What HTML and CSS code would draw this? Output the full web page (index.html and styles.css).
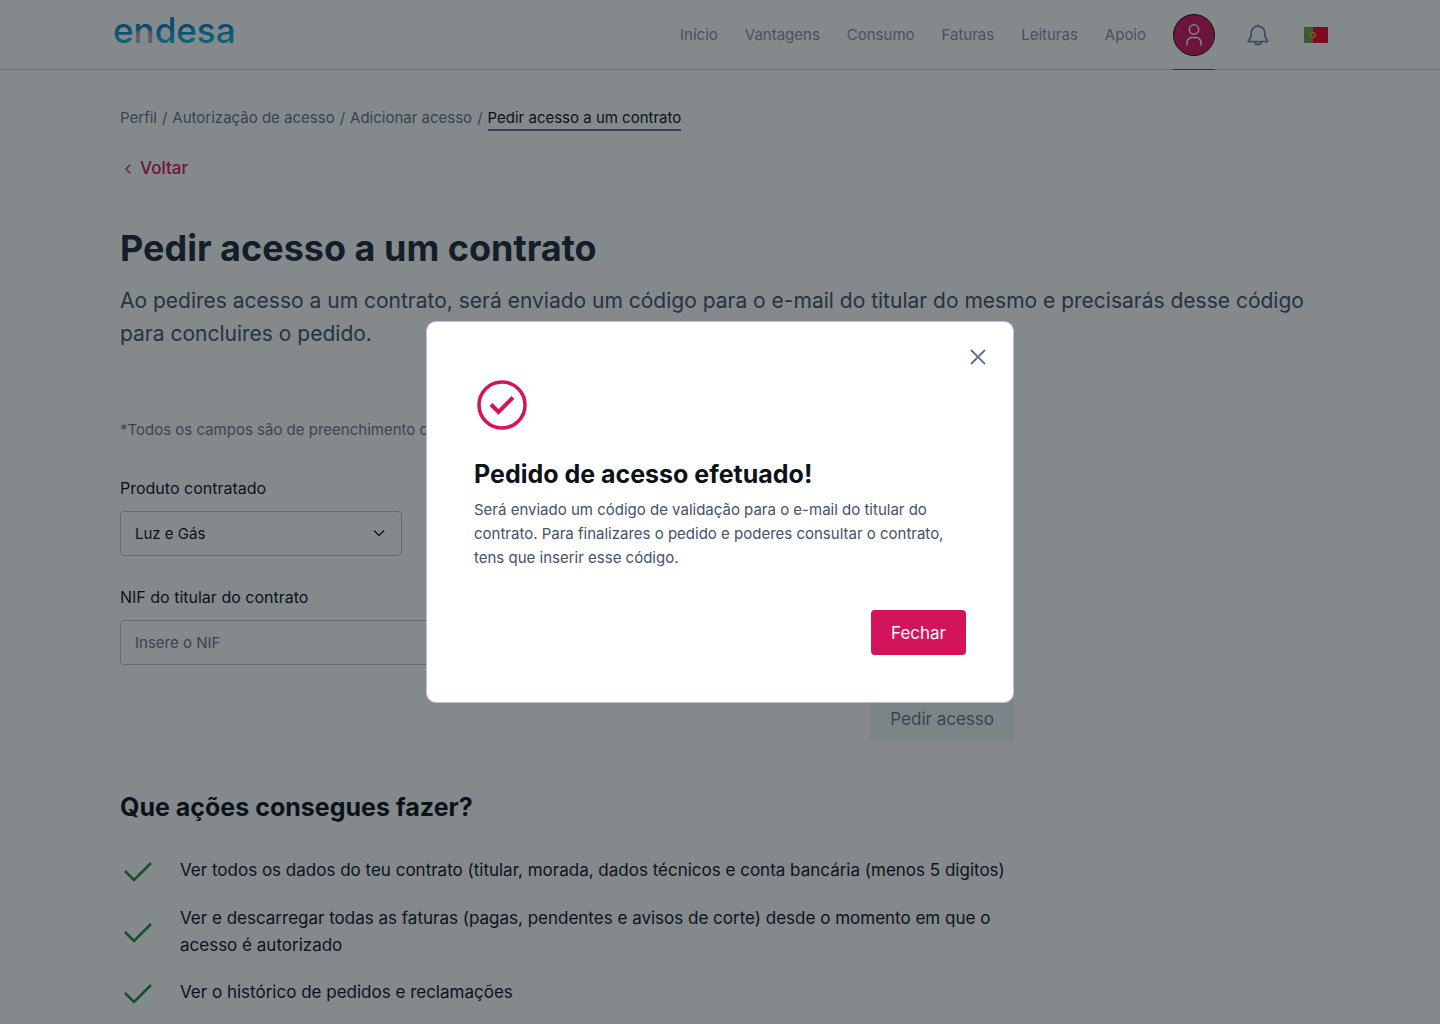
FILE: index.html
```html
<!DOCTYPE html>
<html lang="pt">
<head>
  <meta charset="UTF-8">
  <meta name="viewport" content="width=device-width, initial-scale=1.0">
  <title>Pedir acesso a um contrato</title>
  <link rel="stylesheet" href="styles.css">
</head>
<body class="modal-open">

<header class="header">
  <div class="header-inner">
    <a href="#" class="logo" aria-label="endesa">
      <svg width="140" height="52" viewBox="0 0 140 52">
        <defs>
          <linearGradient id="blue" gradientUnits="userSpaceOnUse" x1="0" y1="14" x2="0" y2="38">
            <stop offset="0.3" stop-color="#107fc4"/>
            <stop offset="0.9" stop-color="#10b4d8"/>
          </linearGradient>
          <linearGradient id="fade" gradientUnits="userSpaceOnUse" x1="0" y1="14" x2="0" y2="38">
            <stop offset="0.4" stop-color="#107fc4"/>
            <stop offset="0.65" stop-color="#b0acac"/>
          </linearGradient>
        </defs>
        <text x="1" y="38" class="logo-text" fill="url(#blue)">e<tspan fill="url(#fade)">n</tspan>desa</text>
      </svg>
    </a>
    <nav class="nav">
      <a href="#">Início</a>
      <a href="#">Vantagens</a>
      <a href="#">Consumo</a>
      <a href="#">Faturas</a>
      <a href="#">Leituras</a>
      <a href="#">Apoio</a>
      <a href="#" class="profile" aria-label="Perfil">
        <span class="avatar">
          <svg width="24" height="24" viewBox="0 0 24 24" fill="none" stroke="currentColor" stroke-width="1.5">
            <circle cx="12" cy="6.5" r="4.7"/>
            <path d="M5 22.5v-3a5 5 0 0 1 5-5h4a5 5 0 0 1 5 5v3"/>
          </svg>
        </span>
      </a>
    </nav>
    <button class="icon-btn bell" aria-label="Notificações">
      <svg width="24" height="24" viewBox="0 0 24 24" fill="none" stroke="currentColor" stroke-width="1.7" stroke-linejoin="round">
        <path d="M12 3.2V1.5M12 3.2a6.8 6.8 0 0 0-6.8 6.8c0 4-.6 5.8-2.7 7.2v1.5h19v-1.5c-2.1-1.4-2.7-3.2-2.7-7.2A6.8 6.8 0 0 0 12 3.2z"/>
        <path d="M9 18.7a3 3 0 0 0 6 0"/>
      </svg>
    </button>
    <button class="icon-btn flag" aria-label="Português">
      <svg width="24" height="16" viewBox="0 0 24 16">
        <path fill="#f00022" d="M0 0h24v16H0z"/>
        <path fill="#6da544" d="M0 0h9v16H0z"/>
        <circle cx="9" cy="8" r="2.6" fill="none" stroke="#ffda44"/>
        <path fill="#f00022" d="M7.5 6.5h3V8.500a1.5 1.5 0 0 1-3 0z"/>
        <path fill="#fff" d="M8.5 7.3h1v1.5h-1z"/>
      </svg>
    </button>
  </div>
</header>

<main class="container">
  <nav class="breadcrumb">
    <a href="#">Perfil</a> <span>/</span>
    <a href="#">Autorização de acesso</a> <span>/</span>
    <a href="#">Adicionar acesso</a> <span>/</span>
    <a href="#" class="current">Pedir acesso a um contrato</a>
  </nav>

  <a href="#" class="back">
    <svg width="16" height="16" viewBox="0 0 16 16" fill="none" stroke="currentColor" stroke-width="1.2">
      <path d="M10.5 3.5L6 8l4.5 4.5"/>
    </svg>
    Voltar
  </a>

  <h1>Pedir acesso a um contrato</h1>
  <p class="intro">Ao pedires acesso a um contrato, será enviado um código para o e-mail do titular do mesmo e precisarás desse código para concluires o pedido.</p>

  <form class="form">
    <p class="note">*Todos os campos são de preenchimento obrigatório</p>

    <label for="produto">Produto contratado</label>
    <div class="select">
      <select id="produto">
        <option>Luz e Gás</option>
      </select>
      <svg width="16" height="16" viewBox="0 0 16 16" fill="none" stroke="currentColor" stroke-width="1.3">
        <path d="M3 5.5l5 5 5-5"/>
      </svg>
    </div>

    <label for="nif">NIF do titular do contrato</label>
    <input type="text" id="nif" placeholder="Insere o NIF">

    <button type="submit" class="btn btn-disabled" disabled>Pedir acesso</button>
  </form>

  <section class="actions">
    <h2>Que ações consegues fazer?</h2>
    <ul>
      <li>
        <svg width="36" height="32" viewBox="0 0 36 32"><path d="M5 16l9 9L31 8"/></svg>
        <span>Ver todos os dados do teu contrato (titular, morada, dados técnicos e conta bancária (menos 5 digitos)</span>
      </li>
      <li>
        <svg width="36" height="32" viewBox="0 0 36 32"><path d="M5 16l9 9L31 8"/></svg>
        <span>Ver e descarregar todas as faturas (pagas, pendentes e avisos de corte) desde o momento em que o acesso é autorizado</span>
      </li>
      <li>
        <svg width="36" height="32" viewBox="0 0 36 32"><path d="M5 16l9 9L31 8"/></svg>
        <span>Ver o histórico de pedidos e reclamações</span>
      </li>
    </ul>
  </section>
</main>

<div class="overlay" id="overlay">
  <div class="modal" role="dialog" aria-modal="true" aria-labelledby="modal-title">
    <button class="close" aria-label="Fechar janela" onclick="closeModal()">
      <svg width="24" height="24" viewBox="0 0 24 24" fill="none" stroke="currentColor" stroke-width="1.8">
        <path d="M5 5l14 14M19 5L5 19"/>
      </svg>
    </button>
    <svg class="success" width="56" height="56" viewBox="0 0 56 56" fill="none" stroke="currentColor">
      <circle cx="28" cy="28" r="23" stroke-width="3.5"/>
      <path d="M17 27.5l7.5 7.5L39 20.5" stroke-width="4"/>
    </svg>
    <h2 id="modal-title">Pedido de acesso efetuado!</h2>
    <p>Será enviado um código de validação para o e-mail do titular do contrato. Para finalizares o pedido e poderes consultar o contrato, tens que inserir esse código.</p>
    <button class="btn btn-primary" onclick="closeModal()">Fechar</button>
  </div>
</div>

<script>
  function closeModal() {
    document.getElementById('overlay').style.display = 'none';
    document.body.classList.remove('modal-open');
  }
</script>

</body>
</html>
```
FILE: styles.css
```css
* {
  box-sizing: border-box;
}

body {
  margin: 0;
  background: #fff;
  color: #0b1219;
  font-family: Inter, "Open Sans", sans-serif;
  font-size: 15px;
  line-height: 24px;
}

.modal-open {
  overflow: hidden;
}

a {
  color: inherit;
  text-decoration: none;
}

button,
input,
select {
  font-family: inherit;
  font-size: 15px;
}

h1,
h2,
p,
ul {
  margin: 0;
  padding: 0;
}

svg {
  display: block;
  flex-shrink: 0;
}

/* header */
.header {
  border-bottom: 1px solid #c0cbdc;
}

.header-inner {
  display: flex;
  align-items: center;
  max-width: 1216px;
  height: 69px;
  margin: 0 auto;
}

.logo {
  margin-right: auto;
  padding-bottom: 8px;
}

.logo-text {
  font-family: Inter, sans-serif;
  font-size: 35px;
  font-weight: 500;
}

.nav {
  display: flex;
  align-items: center;
  gap: 27px;
  height: 100%;
  color: #8692a4;
}

.profile {
  display: flex;
  align-items: center;
  height: 70px;
  margin-bottom: -1px;
  border-bottom: 1px solid #4a5568;
}

.avatar {
  display: flex;
  align-items: center;
  justify-content: center;
  width: 42px;
  height: 42px;
  border: 1px solid #10151c;
  border-radius: 50%;
  background: #d3135a;
  color: #fff;
}

.icon-btn {
  padding: 0;
  border: none;
  background: none;
  color: #71839b;
  cursor: pointer;
}

.bell {
  margin: 0 34px 0 31px;
}

/* page */
.container {
  max-width: 1248px;
  margin: 0 auto;
  padding: 36px 24px 16px;
}

.breadcrumb {
  display: flex;
  gap: 5px;
  height: 25px;
  color: #64748b;
}

.breadcrumb .current {
  color: #0b1219;
  border-bottom: 2px solid #64748b;
}

.back {
  display: inline-flex;
  align-items: center;
  gap: 4px;
  margin-top: 24px;
  color: #d3135a;
  font-size: 17px;
  font-weight: 500;
  line-height: 27px;
}

h1 {
  margin-top: 36px;
  font-size: 36px;
  font-weight: 700;
  line-height: 56px;
  color: #1c2836;
}

.intro {
  margin-top: 8px;
  font-size: 21px;
  line-height: 33px;
  color: #42526b;
}

.form {
  display: flex;
  flex-direction: column;
  align-items: flex-start;
  max-width: 894px;
  margin-top: 68px;
}

.note {
  margin-bottom: 34px;
  color: #737880;
}

.form label {
  margin-bottom: 11px;
  font-size: 16px;
}

.select {
  display: grid;
  align-items: center;
  width: 282px;
  margin-bottom: 29px;
}

.select select,
.select svg {
  grid-area: 1 / 1;
}

.select svg {
  justify-self: end;
  margin-right: 15px;
  pointer-events: none;
}

.form select,
.form input {
  width: 100%;
  height: 45px;
  padding: 0 14px;
  border: 1px solid #b9c3d3;
  border-radius: 4px;
  background: none;
  color: #0b1219;
  appearance: none;
}

.form input::placeholder {
  color: #64748b;
  opacity: 1;
}

.btn {
  align-self: flex-end;
  height: 45px;
  padding: 0 20px;
  border: none;
  border-radius: 4px;
  font-size: 17px;
}

.btn-disabled {
  margin-top: 32px;
  background: #f1f4f7;
  color: #64748b;
}

.btn-primary {
  background: #d3135a;
  color: #fff;
  cursor: pointer;
}

.actions {
  max-width: 894px;
  margin-top: 45px;
}

h2 {
  font-size: 25px;
  font-weight: 700;
  line-height: 40px;
}

.actions ul {
  display: flex;
  flex-direction: column;
  gap: 18px;
  margin-top: 28px;
  list-style: none;
}

.actions li {
  display: flex;
  align-items: center;
  gap: 24px;
  font-size: 17px;
  line-height: 27px;
}

.actions li path {
  fill: none;
  stroke: #228a2c;
  stroke-width: 2.5;
}

/* modal */
.overlay {
  position: fixed;
  inset: 0;
  display: flex;
  align-items: center;
  justify-content: center;
  background: rgba(10, 20, 26, 0.5);
}

.modal {
  position: relative;
  display: flex;
  flex-direction: column;
  width: 588px;
  max-width: 100%;
  padding: 55px 47px 47px;
  border: 1px solid #b9c3d3;
  border-radius: 10px;
  background: #fff;
}

.close {
  position: absolute;
  top: 23px;
  right: 23px;
  padding: 0;
  border: none;
  background: none;
  color: #64748b;
  cursor: pointer;
}

.success {
  color: #d3135a;
}

.modal h2 {
  margin-top: 21px;
}

.modal p {
  margin: 4px 0 40px;
  color: #42526b;
}
```
